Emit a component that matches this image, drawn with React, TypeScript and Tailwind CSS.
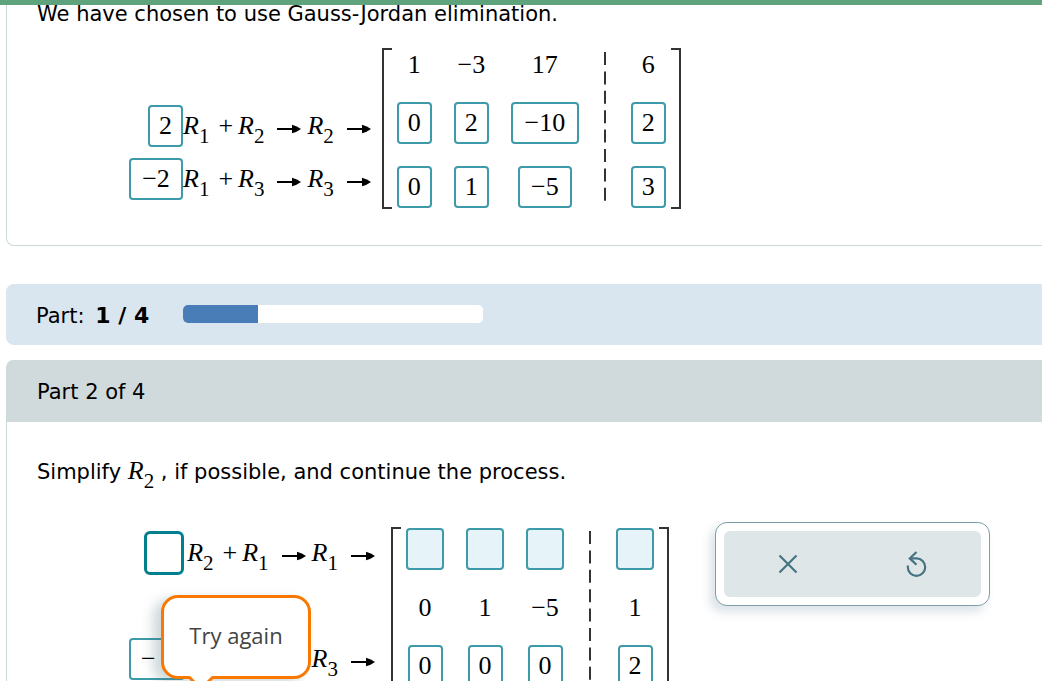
import React from "react";
import clsx from "clsx";

type Cell = { value: string; boxed?: boolean; empty?: boolean; width?: string };

const firstMatrix: Cell[][] = [
  [{ value: "1" }, { value: "0", boxed: true }, { value: "0", boxed: true }],
  [{ value: "−3" }, { value: "2", boxed: true }, { value: "1", boxed: true }],
  [
    { value: "17" },
    { value: "−10", boxed: true, width: "w-[68px]" },
    { value: "−5", boxed: true, width: "w-[54px]" },
  ],
  [{ value: "6" }, { value: "2", boxed: true }, { value: "3", boxed: true }],
];

const secondMatrix: Cell[][] = [
  [{ value: "", empty: true }, { value: "0" }, { value: "0", boxed: true }],
  [{ value: "", empty: true }, { value: "1" }, { value: "0", boxed: true }],
  [{ value: "", empty: true }, { value: "−5" }, { value: "0", boxed: true }],
  [{ value: "", empty: true }, { value: "1" }, { value: "2", boxed: true }],
];

const AnswerBox = ({ value, label, style }: { value: string; label: string; style?: string }) => (
  <input
    type="text"
    aria-label={label}
    defaultValue={value}
    className={clsx(
      "h-[42px] shrink-0 rounded-[4px] border-2 border-[#3d9aa8] outline-none",
      style
    )}
  />
);

const Row = ({ n }: { n: number }) => (
  <span className="whitespace-nowrap">
    <i>R</i>
    <sub className="static align-[-9px] text-[21px]">{n}</sub>
  </span>
);

const Arrow = ({ style }: { style?: string }) => (
  <svg viewBox="0 0 24 10" className={clsx("mt-[6px] h-[10px] w-6 shrink-0", style)} aria-hidden="true">
    <path d="M0 5H17" stroke="#000" strokeWidth="2" />
    <path d="M15 0.8Q20 2 24 5Q20 8 15 9.2Z" fill="#000" />
  </svg>
);

const Operation = ({ from, to, children }: { from: number; to: number; children: React.ReactNode }) => (
  <div className="flex items-center justify-end">
    {children}
    <Row n={from} />
    <span className="ml-[9px] mr-[5px]">+</span>
    <Row n={to} />
    <Arrow style="ml-[13px] mr-[6px]" />
    <Row n={to} />
    <Arrow style="ml-[13px]" />
  </div>
);

const MatrixColumn = ({ cells, col }: { cells: Cell[]; col: number }) => (
  <div className="flex flex-col items-center gap-[22px]">
    {cells.map((cell, index) => {
      const label = `Row ${index + 1}, column ${col}`;
      if (cell.empty) {
        return <AnswerBox key={index} value="" label={label} style="w-[38px] bg-[#e6f4f9]" />;
      }
      if (cell.boxed) {
        return (
          <AnswerBox key={index} value={cell.value} label={label} style={clsx("text-center", cell.width || "w-[35px]")} />
        );
      }
      return (
        <span key={index} className="h-[31px] leading-[31px]">
          {cell.value}
        </span>
      );
    })}
  </div>
);

const Matrix = ({ columns }: { columns: Cell[][] }) => (
  <div className="flex shrink-0">
    <div className="w-[10px] border-y-2 border-l-2 border-[#333]" />
    <div className="flex gap-[22px] px-[5px] py-px">
      {columns.slice(0, 3).map((cells, index) => (
        <MatrixColumn key={index} cells={cells} col={index + 1} />
      ))}
      {/* divider before the constants */}
      <svg className="my-[3px] h-[150px] w-2" aria-hidden="true">
        <line x1="4" y1="0" x2="4" y2="150" stroke="#333" strokeWidth="2" strokeDasharray="13 6.4" />
      </svg>
      <MatrixColumn cells={columns[3]} col={4} />
    </div>
    <div className="w-[10px] border-y-2 border-r-2 border-[#333]" />
  </div>
);

const TryAgain = () => (
  <div
    role="status"
    className="absolute -top-[43px] left-8 flex h-[84px] w-[150px] items-center justify-center rounded-[17px] border-3 border-[#fa7800] bg-white pb-1 font-['Open_Sans',sans-serif] text-[22px] text-[#444] shadow-[-8px_4px_12px_rgba(60,100,110,0.25)]"
  >
    Try again
    <svg viewBox="0 0 24 14" className="absolute -bottom-[14px] left-[25px] h-[14px] w-6" aria-hidden="true">
      <path d="M0 0H24L12 12Z" fill="#fff" />
      <path d="M0 1L12 13L24 1" fill="none" stroke="#fa7800" strokeWidth="3" />
    </svg>
  </div>
);

const Keypad = () => (
  <div className="ml-[46px] w-[275px] shrink-0 rounded-xl border border-[#7b9ea9] bg-white p-2 shadow-[-5px_6px_10px_rgba(60,100,120,0.18)]">
    <div className="grid h-[66px] grid-cols-2 rounded-md bg-[#dfe6e8] text-[#457381]">
      <button type="button" aria-label="Clear" className="flex items-center justify-center">
        <svg viewBox="0 0 20 20" className="size-5" fill="none" stroke="currentColor" strokeWidth="2.2">
          <path d="M1.5 1.5L18.5 18.5M18.5 1.5L1.5 18.5" />
        </svg>
      </button>
      <button type="button" aria-label="Undo" className="flex items-center justify-center">
        <svg viewBox="0 0 21 26" className="h-[26px] w-[21px]" fill="none" stroke="currentColor" strokeWidth="2.2">
          <path d="M10.5 1L3.8 7.4L10.5 13.8" />
          <path d="M3.8 7.4H10.5A8.7 8.7 0 1 1 1.8 16V14.5" />
        </svg>
      </button>
    </div>
  </div>
);

const App = () => {
  const done = 1;
  const total = 4;

  return (
    <div className="h-screen overflow-hidden bg-white font-['DejaVu_Sans',sans-serif] text-[21px] text-black">
      <div className="h-[5px] bg-[#5fa37d]" />
      <main className="pl-[6px]">
        <section className="rounded-bl-lg border-b border-l border-[#ccd7d8] pb-9 pl-[30px]">
          <p className="leading-[18px]">We have chosen to use Gauss-Jordan elimination.</p>
          <div className="mt-[25px] ml-[92px] flex items-start gap-[11px] font-['Liberation_Serif',serif] text-[26px] leading-8">
            <div className="mt-[57px] flex flex-col gap-[11px]">
              <Operation from={1} to={2}>
                <AnswerBox value="2" label="Multiplier of row 1" style="w-[35px] text-center" />
              </Operation>
              <Operation from={1} to={3}>
                <AnswerBox value="−2" label="Multiplier of row 1" style="w-[54px] text-center" />
              </Operation>
            </div>
            <Matrix columns={firstMatrix} />
          </div>
        </section>

        {/* progress */}
        <section className="mt-[38px] flex h-[61px] items-center gap-[34px] rounded-l-lg bg-[#dae6ef] pb-px pl-[30px]">
          <p className="pt-[3px]">
            Part: <b className="ml-1 text-[22px]">{done} / {total}</b>
          </p>
          <div className="h-[18px] w-[300px] overflow-hidden rounded-[5px] bg-white">
            <div className="h-full bg-[#487db8]" style={{ width: `${(done / total) * 100}%` }} />
          </div>
        </section>

        <section className="mt-[15px] rounded-tl-lg border-l border-[#ccd7d8]">
          <h2 className="flex h-[62px] items-center rounded-tl-md bg-[#d0d9db] pt-[3px] pl-[30px]">Part 2 of 4</h2>
          <div className="pl-[30px] pt-[33px]">
            <p className="leading-8">
              Simplify{" "}
              <span className="font-['Liberation_Serif',serif] text-[26px]">
                <Row n={2} />
              </span>{" "}
              , if possible, and continue the process.
            </p>
            <div className="mt-[34px] ml-[92px] flex items-start font-['Liberation_Serif',serif] text-[26px] leading-8">
              <div className="mt-[9px] mr-4 flex w-[246px] shrink-0 flex-col gap-[63px]">
                <Operation from={2} to={1}>
                  <input
                    type="text"
                    aria-label="Multiplier of row 2"
                    className="mr-[3px] h-11 w-10 rounded-md border-3 border-[#00808f] text-center outline-none"
                  />
                </Operation>
                <div className="relative flex items-center justify-between">
                  <AnswerBox value="−" label="Multiplier of row 2" style="w-14 pl-[10px]" />
                  <TryAgain />
                  <div className="flex items-center">
                    <Row n={3} />
                    <Arrow style="ml-[13px]" />
                  </div>
                </div>
              </div>
              <div className="mt-[5px]">
                <Matrix columns={secondMatrix} />
              </div>
              <Keypad />
            </div>
          </div>
        </section>
      </main>
    </div>
  );
};

export default App;
